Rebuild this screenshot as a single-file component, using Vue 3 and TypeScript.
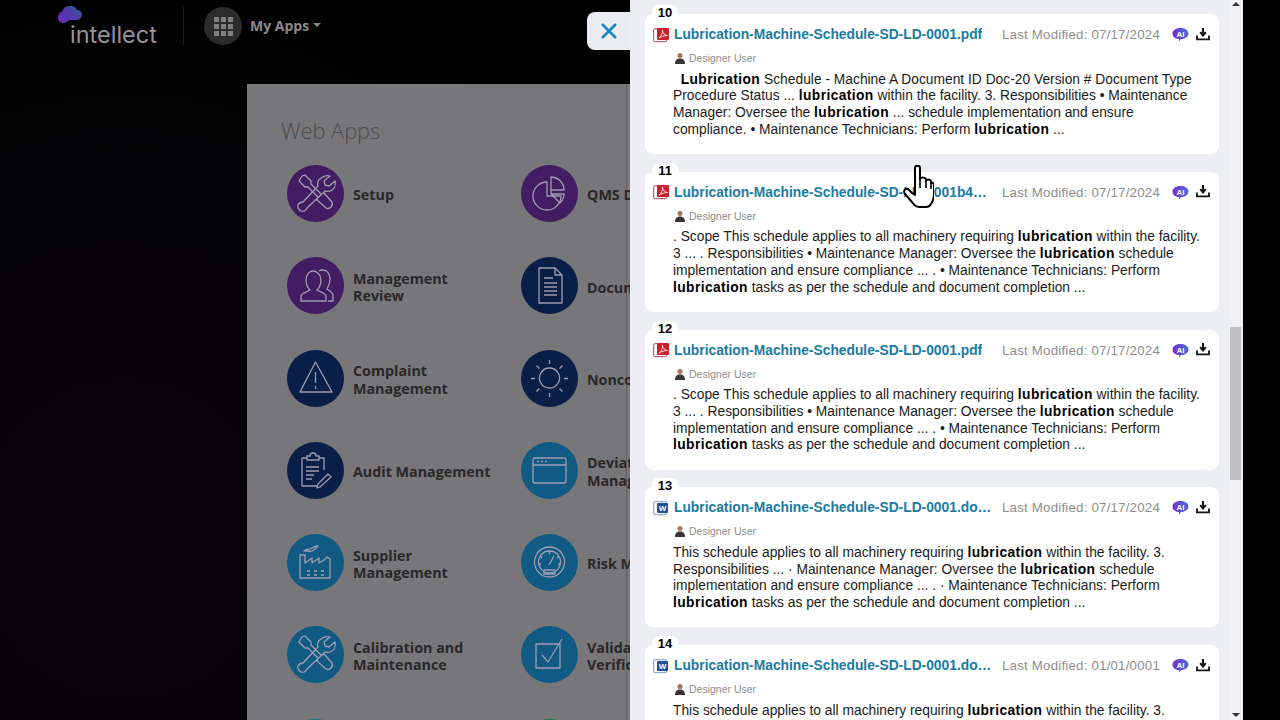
<script setup lang="ts">
const purple = '#431d63'
const navy = '#0a1f47'
const blue = '#115a84'

const wrench = 'M15 11l3-1 6 6v3l10 10 3-1 8 9c1 2 0 4-1 5s-3 2-5 1l-9-8 1-3-10-10h-3l-6-6zM43 11l-6 5 1 4 4 1 6-5c1 5-1 9-5 10-3 1-4 0-5 0L20 43c-1 3-4 4-6 3s-4-4-3-6c1-2 2-3 5-3l15-16c-1-3 0-6 3-8 3-2 6-3 9-2z'

const apps = [
  { label: 'Setup', color: purple, icon: wrench },
  { label: 'QMS Dashboard', color: purple, icon: 'M26 17a14 14 0 1 0 14 14H26zM30 12a13 13 0 0 1 13 13H30zM30 29h13a13 13 0 0 1-4 9zM30 12v17' },
  { label: 'Management Review', color: purple, icon: 'M14 44v-5c0-3 6-4 9-6-3-3-4-6-4-10 0-5 3-9 7-9s8 4 8 9c0 4-1 7-4 10 3 2 9 3 9 6v5zM32 14c1-1 3-1 4-1 4 0 7 4 7 9 0 4-1 7-3 10 2 2 6 3 6 6v6h-5' },
  { label: 'Documents', color: navy, icon: 'M18 11h16l7 7v28H18zM34 11v7h7M23 21h9M23 26h13M23 30h13M23 34h13M23 38h13' },
  { label: 'Complaint Management', color: navy, icon: 'M28.5 12L45 42H13zM28.5 22v11M28.5 36v3' },
  { label: 'Nonconformance', color: navy, icon: 'M28.5 18a10 10 0 1 0 .01 0zM28.5 10v4M28.5 43v4M10 28.5h4M43 28.5h4M15.500 15.500l3 3M38.500 38.500l3 3M41.500 15.500l-3 3M18.500 38.500l-3 3' },
  { label: 'Audit Management', color: navy, icon: 'M20 16h-5v28h15M32 16h5v12M20 18v-4h3a3 3 0 0 1 6 0h3v4zM19 25h13M19 29h13M19 33h8M19 37h6M33 45l-3 1 1-4 10-10 3 3z' },
  { label: 'Deviation Management', color: blue, icon: 'M14 16h29a2 2 0 0 1 2 2v21a2 2 0 0 1-2 2H14a2 2 0 0 1-2-2V18a2 2 0 0 1 2-2zM12 23h33M16 19.500h2M20 19.500h2M24 19.500h2' },
  { label: 'Supplier Management', color: blue, icon: 'M13 44V21h5v8l7-5v5l7-5v5l5-3 3-3 3 2v19zM17 17c3-3 5-1 8-3 2-1 3-2 6-2-2 2-3 4-6 5-3 1-5-1-8 0zM20 37h3M27 37h3M34 37h3M20 41h3M27 41h3M34 41h3' },
  { label: 'Risk Management', color: blue, icon: 'M28.500 13a15 15 0 1 0 .01 0zM28.500 17a11 11 0 1 0 .01 0zM28 31l5-9M23 36h11v4H23zM19 22l2 2M28.500 17v3M38 22l-2 2M17 30h3M37 30h3' },
  { label: 'Calibration and Maintenance', color: blue, icon: wrench },
  { label: 'Validation and Verification', color: blue, icon: 'M15 18h24v24H15zM21 29l6 7 14-23' },
  { label: 'Training', color: '#13707c', icon: '' },
  { label: 'Reports', color: '#1c7a45', icon: '' }
]

const body10 = '  Lubrication Schedule - Machine A Document ID Doc-20 Version # Document Type Procedure Status ... lubrication within the facility. 3. Responsibilities • Maintenance Manager: Oversee the lubrication ... schedule implementation and ensure compliance. • Maintenance Technicians: Perform lubrication ...'
const bodyScope = '. Scope This schedule applies to all machinery requiring lubrication within the facility. 3 ... . Responsibilities • Maintenance Manager: Oversee the lubrication schedule implementation and ensure compliance ... . • Maintenance Technicians: Perform lubrication tasks as per the schedule and document completion ...'
const bodyWord = 'This schedule applies to all machinery requiring lubrication within the facility. 3. Responsibilities ... · Maintenance Manager: Oversee the lubrication schedule implementation and ensure compliance ... . · Maintenance Technicians: Perform lubrication tasks as per the schedule and document completion ...'

const results = [
  { no: 10, kind: 'pdf', name: 'Lubrication-Machine-Schedule-SD-LD-0001.pdf', date: '07/17/2024', body: body10 },
  { no: 11, kind: 'pdf', name: 'Lubrication-Machine-Schedule-SD-LD-0001b4c7e2f9a.pdf', date: '07/17/2024', body: bodyScope },
  { no: 12, kind: 'pdf', name: 'Lubrication-Machine-Schedule-SD-LD-0001.pdf', date: '07/17/2024', body: bodyScope },
  { no: 13, kind: 'doc', name: 'Lubrication-Machine-Schedule-SD-LD-0001.docx', date: '07/17/2024', body: bodyWord },
  { no: 14, kind: 'doc', name: 'Lubrication-Machine-Schedule-SD-LD-0001.docx', date: '01/01/0001', body: bodyWord }
]

function parts(text: string) {
  return text.split(/(lubrication)/i)
}
</script>

<template>
  <div class="page">
    <div class="backdrop">
      <header class="topbar">
        <div class="logo">
          <svg class="logo__cloud" viewBox="0 0 24 18" width="24" height="18">
            <defs>
              <linearGradient id="cloud" x1="0" y1="1" x2="1" y2="0">
                <stop offset="0" stop-color="#7326c4" />
                <stop offset=".6" stop-color="#4a3fa8" />
                <stop offset="1" stop-color="#2a6a8e" />
              </linearGradient>
            </defs>
            <path fill="url(#cloud)" d="M6 17c-4 0-6-2-6-6 0-3 2-5 4-5 1-4 4-6 8-6 4 0 6 1 7 4 3 0 5 2 5 5 0 3-3 5-6 5h-6c-2 0-3 3-6 3z" />
          </svg>
          <span class="logo__text">intellect</span>
        </div>
        <span class="divider"></span>
        <span class="apps-btn">
          <i v-for="n in 9" :key="n"></i>
        </span>
        <span class="my-apps">My Apps</span>
        <span class="caret"></span>
      </header>

      <main class="panel">
        <h2 class="panel__title">Web Apps</h2>
        <div class="app-grid">
          <div v-for="app in apps" :key="app.label" class="app">
            <span class="app__icon" :style="{ backgroundColor: app.color }">
              <svg v-if="app.icon" viewBox="0 0 57 57" width="57" height="57">
                <path :d="app.icon" fill="none" stroke="#a09cae" stroke-width="1.3" stroke-linejoin="round" />
              </svg>
            </span>
            <span class="app__label">{{ app.label }}</span>
          </div>
        </div>
      </main>

      <button class="close">
        <svg viewBox="0 0 18 18" width="18" height="18">
          <path d="M2 2l14 14M16 2L2 16" stroke="#1b86c0" stroke-width="2.600" fill="none" />
        </svg>
      </button>
    </div>

    <aside class="drawer">
      <div class="list">
        <article v-for="item in results" :key="item.no" class="card">
          <span class="card__no">{{ item.no }}</span>
          <div class="card__head">
            <svg v-if="item.kind === 'pdf'" class="file-icon" viewBox="0 0 16 16" width="16" height="16">
              <rect x=".7" y="1.700" width="13" height="13" rx="1.500" fill="#fff" stroke="#a8455f" />
              <rect x="4" y="1" width="12" height="12" rx="1" fill="#cf1f2e" />
              <path d="M6 11c2-1 4-5 3.500-8 0 3 2 5 5 5.500-3 0-6 1-8.500 2.500z" fill="none" stroke="#fff" stroke-width=".8" />
            </svg>
            <svg v-else class="file-icon" viewBox="0 0 16 16" width="16" height="16">
              <rect x=".7" y="1.700" width="13" height="13" rx="1.500" fill="#fff" stroke="#7a97c4" />
              <rect x="4" y="3" width="11" height="10" rx="1" fill="#1f4f9e" />
              <text x="9.500" y="11" class="file-icon__w">W</text>
            </svg>
            <a class="card__name">{{ item.name }}</a>
            <span class="card__date">Last Modified: {{ item.date }}</span>
            <svg class="ai" viewBox="0 0 17 15" width="17" height="15">
              <defs>
                <linearGradient id="ai-fill" x1="0" y1="0" x2="1" y2="0">
                  <stop offset="0" stop-color="#7b2bc8" />
                  <stop offset="1" stop-color="#3f74dc" />
                </linearGradient>
              </defs>
              <path fill="url(#ai-fill)" d="M8.500 1c5 0 8 2.500 8 5.500S13.500 12 9 12l-2 2.500V12C3 12 .5 9.500 .5 6.500S3.500 1 8.500 1z" />
              <text x="8.500" y="9.500" class="ai__text">AI</text>
            </svg>
            <svg class="download" viewBox="0 0 14 14" width="14" height="14">
              <path d="M7 1v6.500M4.200 5.200L7 8.500l2.800-3.300" fill="none" stroke="#111" stroke-width="2" />
              <path d="M1 8.500v3.800h12V8.500" fill="none" stroke="#111" stroke-width="1.800" />
            </svg>
          </div>
          <div class="card__user">
            <svg viewBox="0 0 12 12" width="12" height="12">
              <circle cx="6" cy="3.500" r="2.500" fill="#a5765f" />
              <path d="M1 12c0-4 2-5.500 5-5.500s5 1.500 5 5.500z" fill="#3a3436" />
            </svg>
            <span>Designer User</span>
          </div>
          <p class="card__text">
            <template v-for="(part, i) in parts(item.body)" :key="i">
              <b v-if="i % 2">{{ part }}</b>
              <template v-else>{{ part }}</template>
            </template>
          </p>
        </article>
      </div>
      <div class="scrollbar">
        <span class="scrollbar__up"></span>
        <span class="scrollbar__thumb"></span>
        <span class="scrollbar__down"></span>
      </div>
    </aside>

    <div class="pillar"></div>

    <svg class="hand" viewBox="0 0 33 43" width="33" height="43">
      <path d="M14 3c0-3 5-3 5 0v11c1-2 6-2 6 1v1c1-2 5-2 5 1v1c1-1 3 0 3 2v8c0 4-1 8-3 11-1 2-3 3-5 3h-7c-3 0-5-2-7-5l-7-8c-2-3 0-6 3-5l4 4 3 2z" fill="#fff" stroke="#000" stroke-width="2" stroke-linejoin="round" />
      <path d="M19 14v9M25 16v7M30 18v6" fill="none" stroke="#000" stroke-width="1.600" />
    </svg>
  </div>
</template>

<style>
html, body {
  margin: 0;
  background: #000;
}
</style>

<style scoped>
.page {
  position: relative;
  display: flex;
  width: 1280px;
  height: 720px;
  overflow: hidden;
  background: #000;
  font-family: "Liberation Sans", Arial, sans-serif;
}

.backdrop {
  position: relative;
  display: flex;
  flex-direction: column;
  flex: 0 0 630px;
  min-width: 0;
  background: radial-gradient(ellipse at 20% 75%, #0a050d 0, #040305 50%, #000 80%);
}

.topbar {
  display: flex;
  align-items: center;
  flex: 0 0 84px;
  height: 84px;
  box-sizing: border-box;
  padding: 0 0 32px 58px;
}

.logo {
  position: relative;
  width: 125px;
  height: 38px;
}

.logo__cloud {
  position: absolute;
  left: 0;
  top: -1px;
}

.logo__text {
  position: absolute;
  left: 12px;
  top: 14px;
  color: #969696;
  font-family: Inter, sans-serif;
  font-size: 23.500px;
  line-height: 28px;
}

.divider {
  width: 1px;
  height: 38px;
  background: #1b1b1b;
}

.apps-btn {
  display: grid;
  grid-template-columns: repeat(3, 5px);
  grid-auto-rows: 5px;
  gap: 2px;
  align-content: center;
  justify-content: center;
  width: 38px;
  height: 38px;
  margin-left: 20px;
  border-radius: 50%;
  background: #2c2c2c;
}

.apps-btn i {
  background: #7f7f7f;
}

.my-apps {
  margin: 0 0 2px 8px;
  color: #8a8a8a;
  font-family: "Open Sans", sans-serif;
  font-size: 14px;
  font-weight: 700;
}

.caret {
  width: 0;
  height: 0;
  margin: 0 0 2px 4px;
  border: 4px solid transparent;
  border-top-color: #8a8a8a;
  border-bottom-width: 0;
}

.panel {
  flex: 1;
  min-height: 0;
  margin-left: 247px;
  padding: 33px 0 0 34px;
  overflow: hidden;
  background: #777678;
  box-shadow: inset -3px 0 0 #777678, inset -4px 0 0 #605f61;
}

.panel__title {
  margin: 0;
  color: #4d4c4e;
  font-family: "Open Sans", sans-serif;
  font-size: 21.800px;
  font-weight: 300;
  line-height: 28px;
}

.app-grid {
  display: grid;
  grid-template-columns: repeat(2, 234px);
  grid-auto-rows: 92.300px;
  width: 480px;
  margin: 20px 0 0 6px;
}

.app {
  display: flex;
  align-items: flex-start;
  gap: 9px;
}

.app__icon {
  flex: 0 0 57px;
  width: 57px;
  height: 57px;
  border-radius: 50%;
}

.app__icon svg {
  display: block;
}

.app__label {
  display: flex;
  align-items: center;
  width: 140px;
  height: 57px;
  padding-top: 3px;
  box-sizing: border-box;
  color: #29282a;
  font-family: "Open Sans", sans-serif;
  font-size: 14.300px;
  font-weight: 700;
  line-height: 17.500px;
}

.close {
  position: absolute;
  top: 12px;
  right: 0;
  width: 43px;
  height: 38px;
  padding: 0;
  border: 0;
  border-radius: 8px 0 0 8px;
  background: #eaecf2;
}

.close svg {
  display: block;
  margin: auto;
}

.drawer {
  display: flex;
  flex: 0 0 613px;
  background: #eceef4;
}

.list {
  flex: 1;
  min-width: 0;
  padding: 14px 10px 0 15px;
  overflow: hidden;
}

.card {
  position: relative;
  height: 140px;
  margin-bottom: 17.750px;
  padding: 10.500px 9px 0 8px;
  box-sizing: border-box;
  border-radius: 8px;
  background: #fff;
}

.card__no {
  position: absolute;
  top: -9px;
  left: 7px;
  width: 26px;
  border-radius: 6px 6px 0 0;
  background: #fff;
  color: #000;
  font-size: 13px;
  font-weight: 700;
  line-height: 16px;
  text-align: center;
}

.card__head {
  display: flex;
  align-items: center;
  height: 20px;
}

.file-icon {
  flex: none;
  margin-right: 5px;
}

.file-icon__w {
  fill: #fff;
  font-size: 8px;
  font-weight: 700;
  text-anchor: middle;
}

.card__name {
  overflow: hidden;
  max-width: 318px;
  color: #1a7aa3;
  font-size: 13.800px;
  font-weight: 700;
  white-space: nowrap;
  text-overflow: ellipsis;
}

.card__date {
  margin-left: auto;
  color: #8e8e8e;
  font-size: 13.300px;
  letter-spacing: .2px;
  white-space: nowrap;
}

.ai {
  flex: none;
  margin: 0 7px 0 12px;
}

.ai__text {
  fill: #fff;
  font-size: 8px;
  font-weight: 700;
  text-anchor: middle;
}

.download {
  flex: none;
  margin-top: -2px;
}

.card__user {
  display: flex;
  align-items: center;
  gap: 3px;
  height: 14px;
  margin: 6.500px 0 0 21px;
  color: #8e8e8e;
  font-size: 10.500px;
}

.card__text {
  width: 532px;
  margin: 6.500px 0 0 20px;
  color: #1a1a1a;
  font-size: 13.800px;
  line-height: 16.800px;
  white-space: pre-wrap;
}

.card__text b {
  color: #000;
  letter-spacing: .4px;
}

.scrollbar {
  position: relative;
  flex: 0 0 14px;
  background: #f1f1f5;
}

.scrollbar__up,
.scrollbar__down {
  position: absolute;
  left: 3px;
  width: 0;
  height: 0;
  border: 4px solid transparent;
}

.scrollbar__up {
  top: 2px;
  border-top-width: 0;
  border-bottom-color: #333;
}

.scrollbar__down {
  bottom: 3px;
  border-bottom-width: 0;
  border-top-color: #333;
}

.scrollbar__thumb {
  position: absolute;
  top: 327px;
  left: 1px;
  width: 11px;
  height: 153px;
  background: #c1c1c4;
}

.pillar {
  flex: 1;
  background: #000;
}

.hand {
  position: absolute;
  top: 165px;
  left: 901px;
}
</style>
